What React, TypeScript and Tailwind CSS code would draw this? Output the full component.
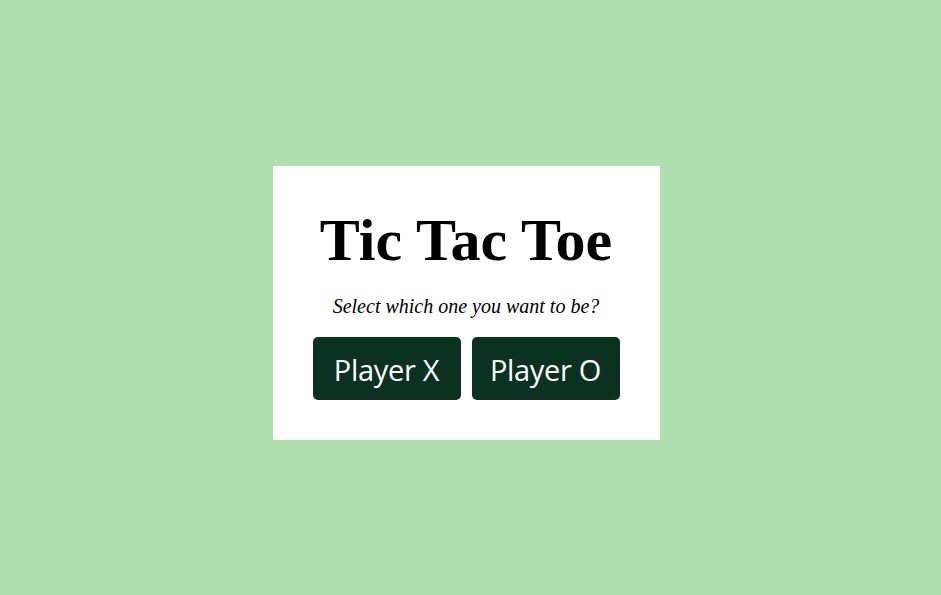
export default function App() {
  return (
    <div className="min-h-screen w-full bg-[#b0dfb1] flex items-center justify-center pt-[10px] pr-[9px]">
      {/* start screen card */}
      <div className="bg-white px-10 pt-[40px] pb-10 w-[387px] flex flex-col items-center">
        <h1 className="font-['Liberation_Serif',serif] font-bold text-[60px] leading-[68px] text-black">
          Tic Tac Toe
        </h1>
        <p className="mt-[21px] font-['Liberation_Serif',serif] italic text-[20px] leading-[22px] text-black">
          Select which one you want to be?
        </p>
        <div className="mt-5 flex gap-[11px]">
          <button className="w-[148px] h-[63px] rounded-[5px] bg-[#0b3121] text-white text-[29px] pt-[3px] font-['Open_Sans',sans-serif] tracking-[-0.3px]">
            Player X
          </button>
          <button className="w-[148px] h-[63px] rounded-[5px] bg-[#0b3121] text-white text-[29px] pt-[3px] font-['Open_Sans',sans-serif] tracking-[-0.3px]">
            Player O
          </button>
        </div>
      </div>
    </div>
  );
}
